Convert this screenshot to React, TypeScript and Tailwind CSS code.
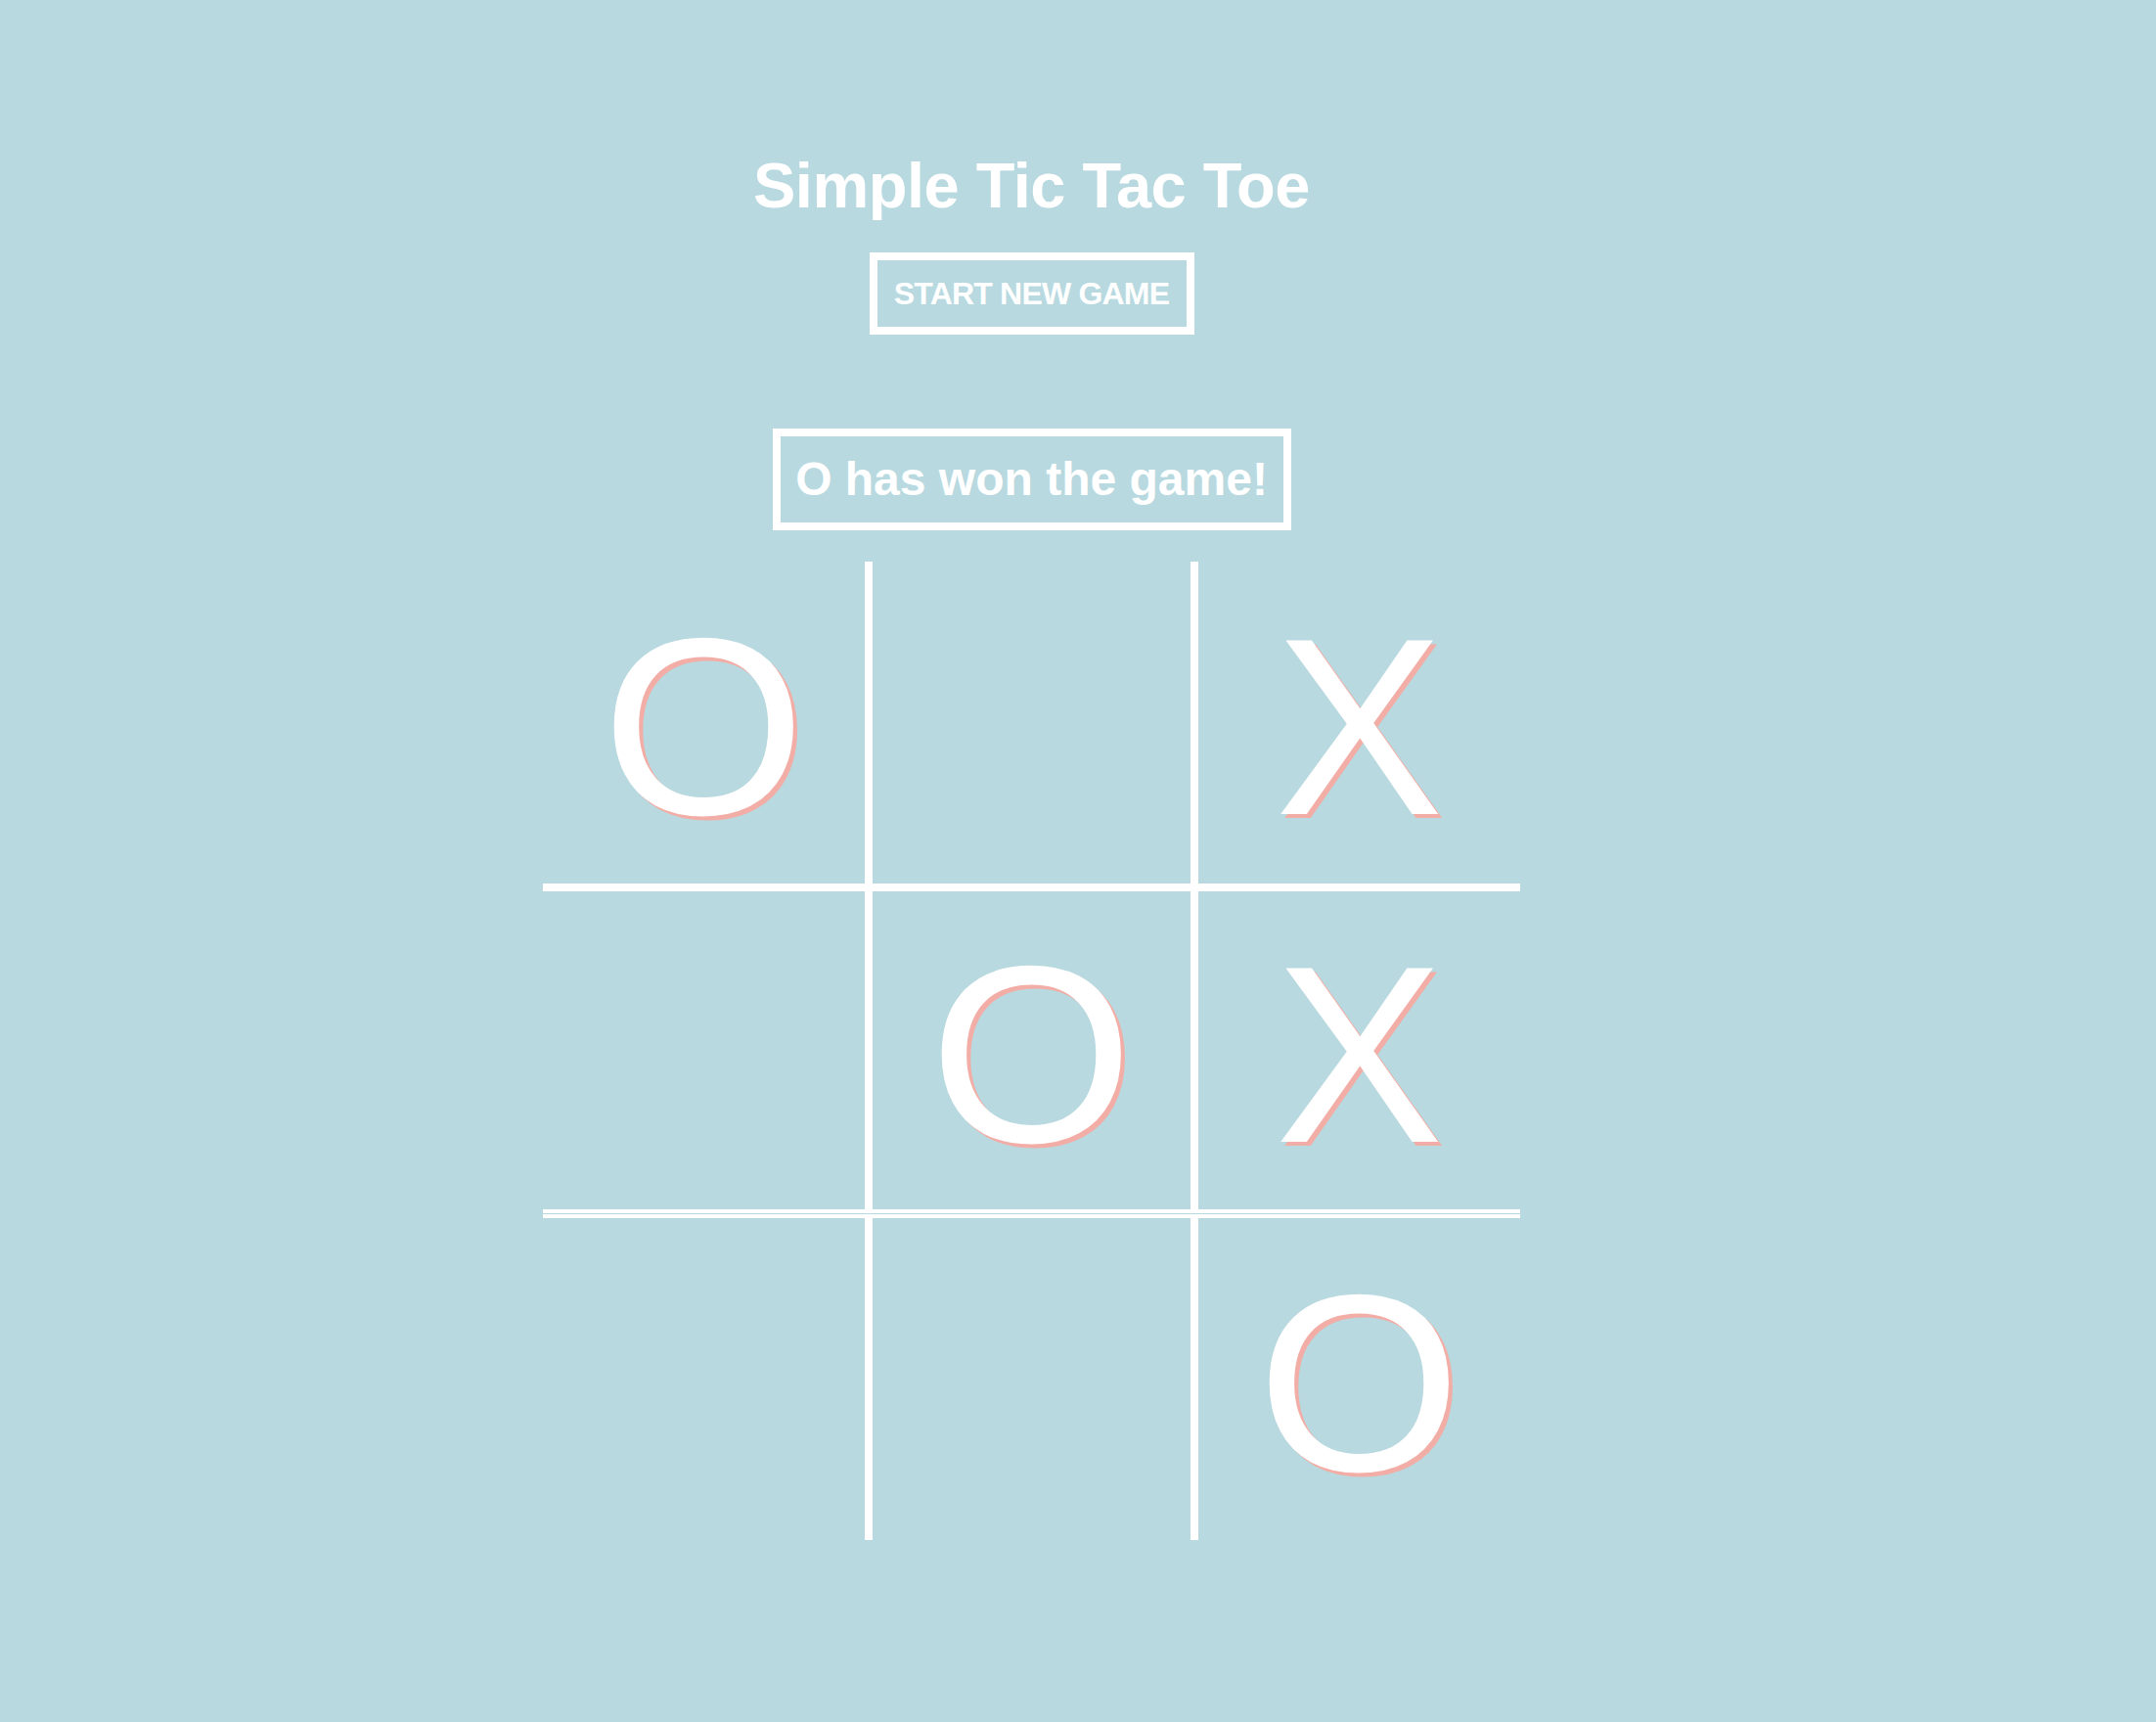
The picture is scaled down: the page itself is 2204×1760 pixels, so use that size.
import { useState } from "react";

type Mark = "X" | "O" | "";

const LINES = [
  [0, 1, 2],
  [3, 4, 5],
  [6, 7, 8],
  [0, 3, 6],
  [1, 4, 7],
  [2, 5, 8],
  [0, 4, 8],
  [2, 4, 6],
];

const START_BOARD: Mark[] = ["O", "", "X", "", "O", "X", "", "", "O"];

function getWinner(board: Mark[]): Mark {
  for (const [a, b, c] of LINES) {
    if (board[a] && board[a] === board[b] && board[a] === board[c]) return board[a];
  }
  return "";
}

export default function App() {
  const [board, setBoard] = useState<Mark[]>(START_BOARD);
  const [turn, setTurn] = useState<"X" | "O">("X");

  const winner = getWinner(board);
  const full = board.every((m) => m !== "");

  let status = `${turn} to move`;
  if (winner) status = `${winner} has won the game!`;
  else if (full) status = "It's a draw!";

  const handleClick = (i: number) => {
    if (winner || board[i]) return;
    const next = [...board];
    next[i] = turn;
    setBoard(next);
    setTurn(turn === "X" ? "O" : "X");
  };

  const reset = () => {
    setBoard(["", "", "", "", "", "", "", "", ""]);
    setTurn("X");
  };

  return (
    <div className="min-h-screen w-full bg-[#b8d9df] text-white font-['Liberation_Sans',Arial,sans-serif] flex flex-col items-center pt-[157px] pr-[95px]">
      <h1 className="text-[65px] leading-none font-bold tracking-[-0.5px]">Simple Tic Tac Toe</h1>

      <button
        onClick={reset}
        className="mt-9 w-[332px] h-[84px] border-8 border-white flex items-center justify-center text-[32px] leading-none font-bold tracking-[-0.8px] uppercase"
      >
        Start new game
      </button>

      <div className="mt-24 w-[530px] h-[104px] border-8 border-white flex items-center justify-center text-[48px] leading-none font-bold">
        {status}
      </div>

      {/* board: internal lines come from 4px borders on neighbouring cells */}
      <div className="mt-8 grid grid-cols-[333px_333px_333px] grid-rows-[333px_333px_334px]">
        {board.map((mark, i) => {
          const r = Math.floor(i / 3);
          const c = i % 3;
          return (
            <div
              key={i}
              onClick={() => handleClick(i)}
              className={`flex items-center justify-center pt-2 border-white cursor-pointer text-[258px] leading-none font-normal [text-shadow:4px_4px_0_#f2aea6] ${
                c < 2 ? "border-r-4" : ""
              } ${c > 0 ? "border-l-4" : ""} ${r < 2 ? "border-b-4" : ""} ${r > 0 ? "border-t-4" : ""} ${
                r === 2 ? "mt-px" : ""
              }`}
            >
              <span className={mark === "O" ? "inline-block scale-x-[1.04]" : "inline-block"}>{mark}</span>
            </div>
          );
        })}
      </div>
    </div>
  );
}
